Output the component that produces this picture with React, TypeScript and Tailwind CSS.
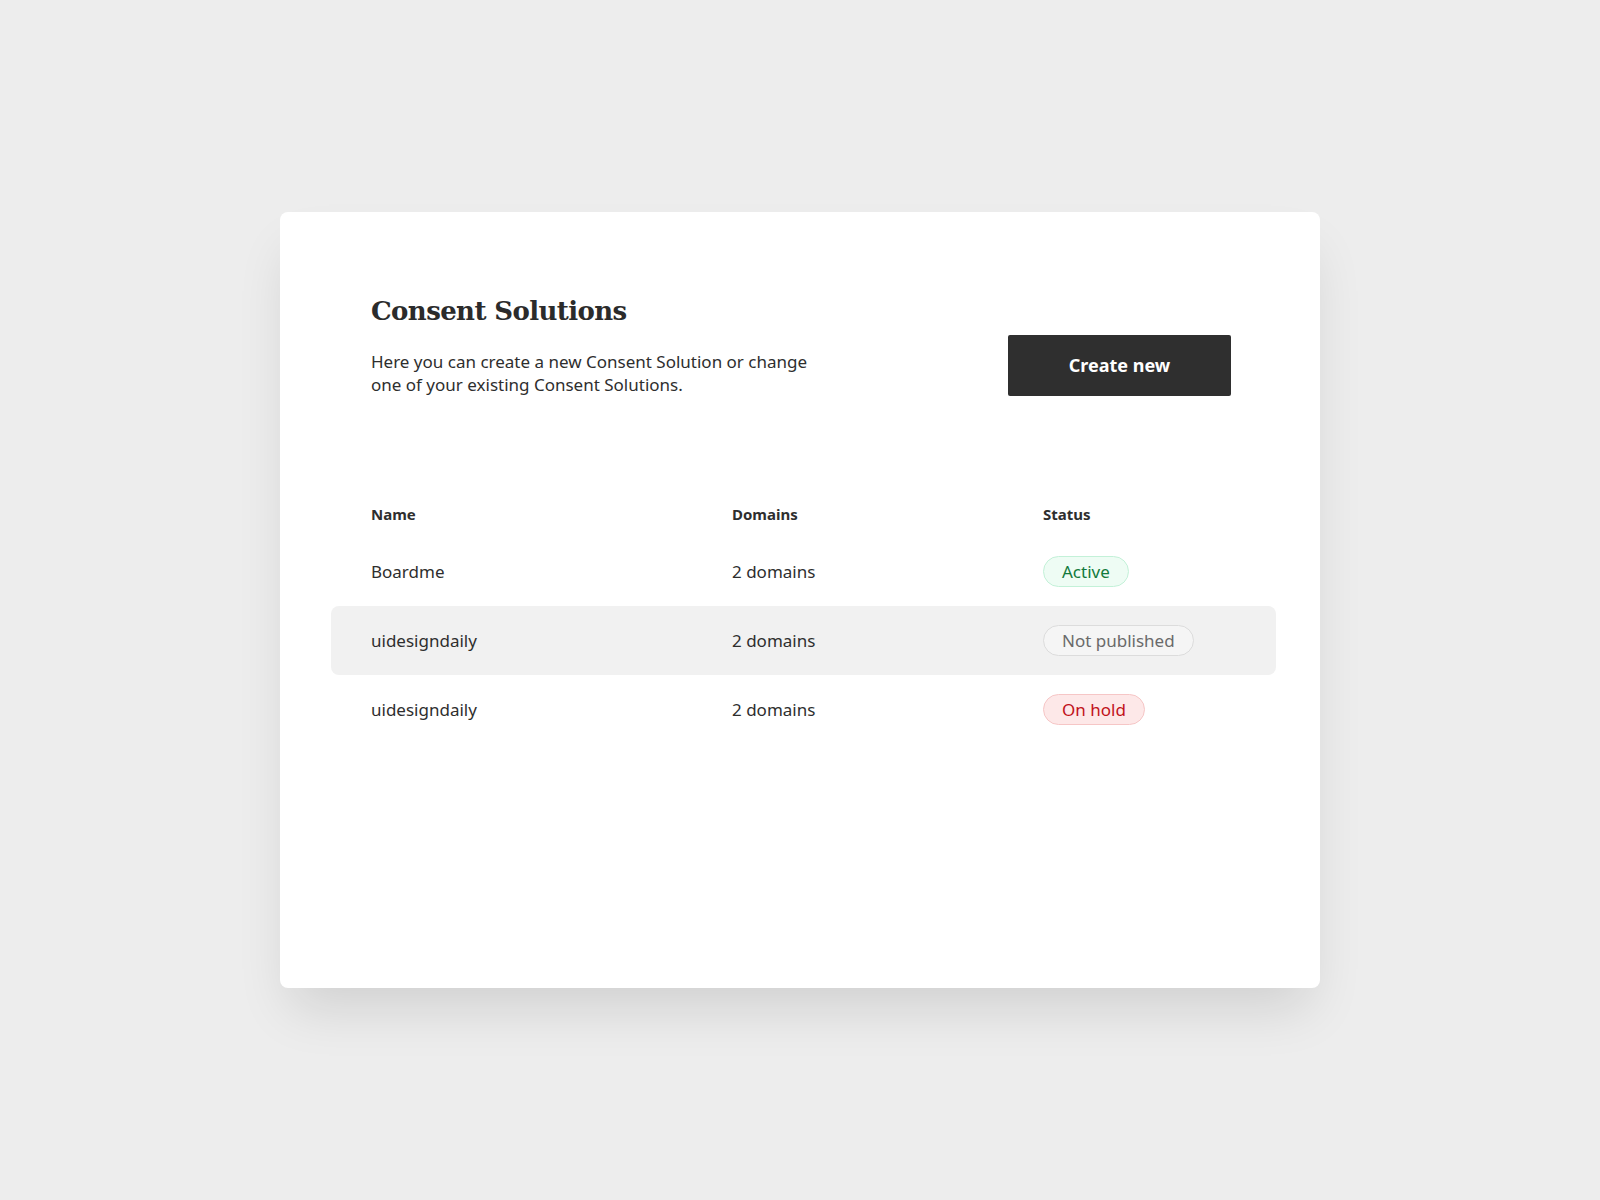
const rows = [
  { name: 'Boardme', domains: '2 domains', status: 'active' },
  { name: 'uidesigndaily', domains: '2 domains', status: 'draft' },
  { name: 'uidesigndaily', domains: '2 domains', status: 'hold' },
];

function StatusBadge({ status }: { status: string }) {
  if (status === 'active') {
    return (
      <span className="inline-flex h-[31px] items-center rounded-full border border-[#c3f1d8] bg-[#eefcf4] px-[18px] text-[17px] text-[#127a3c]">
        Active
      </span>
    );
  }
  if (status === 'hold') {
    return (
      <span className="inline-flex h-[31px] items-center rounded-full border border-[#f6c6c6] bg-[#fde8e8] px-[18px] text-[17px] text-[#c1121a]">
        On hold
      </span>
    );
  }
  return (
    <span className="inline-flex h-[31px] items-center rounded-full border border-[#dcdcdc] bg-[#f5f5f5] px-[18px] text-[17px] text-[#6a6a6a]">
      Not published
    </span>
  );
}

export default function App() {
  return (
    <div className="flex min-h-screen items-center justify-center bg-[#ededed] font-['Noto_Sans',sans-serif] text-[#2e2e2e]">
      <div className="h-[776px] w-[1040px] rounded-lg bg-white shadow-[0_30px_50px_-10px_rgba(0,0,0,0.12)]">
        <div className="flex items-end justify-between pl-[91px] pr-[89px] pt-[81px]">
          <div>
            <h1 className="font-['DejaVu_Serif',serif] text-[26px] font-bold leading-[36px] tracking-[-0.6px] text-[#2b2b2b]">
              Consent Solutions
            </h1>
            <p className="mt-[21px] w-[460px] text-[17px] leading-[23px]">
              Here you can create a new Consent Solution or change one of your existing Consent Solutions.
            </p>
          </div>
          <button className="h-[61px] w-[223px] rounded-[2px] bg-[#2f2f2f] text-[18px] font-bold text-white">
            Create new
          </button>
        </div>

        <div className="ml-[51px] mr-[44px] mt-[96px]">
          <div className="grid h-[45px] grid-cols-[361px_311px_1fr] items-center px-10 text-[15px] font-bold">
            <div>Name</div>
            <div>Domains</div>
            <div>Status</div>
          </div>
          {rows.map((r, i) => (
            <div
              key={i}
              className={`grid h-[69px] grid-cols-[361px_311px_1fr] items-center rounded-lg px-10 text-[17px] ${
                i === 1 ? 'bg-[#f1f1f1]' : ''
              }`}
            >
              <div>{r.name}</div>
              <div>{r.domains}</div>
              <div>
                <StatusBadge status={r.status} />
              </div>
            </div>
          ))}
        </div>
      </div>
    </div>
  );
}
